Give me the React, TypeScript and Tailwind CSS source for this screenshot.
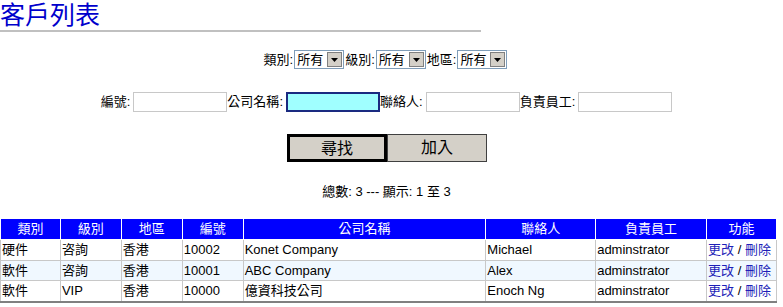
import React from 'react';

const font = { fontFamily: '"Liberation Sans", "Noto Sans CJK TC", sans-serif' };

function FakeSelect() {
  return (
    <div className="flex h-[19px] w-[50px] items-center border border-[#7f9db9] bg-white">
      <span className="flex-1 pl-[2px] text-[13px] leading-none text-black">所有</span>
      <span className="mr-[1px] flex h-[15px] w-[15px] items-center justify-center border border-[#808080] bg-[#d4d0c8]">
        <svg width="7" height="4" viewBox="0 0 7 4">
          <path d="M0 0h7L3.5 4z" fill="#000" />
        </svg>
      </span>
    </div>
  );
}

function Field({ label, active }: { label: string; active?: boolean }) {
  return (
    <div className="flex items-center">
      <span className="text-[13px]">{label}:</span>
      <div
        className={
          active
            ? 'ml-[3px] h-[20px] w-[94px] border-2 border-[#1a2a80] bg-[#a0ffff]'
            : 'ml-[3px] h-[20px] w-[94px] border border-[#c8c8c8] bg-white'
        }
      />
    </div>
  );
}

const rows = [
  { type: '硬件', level: '咨詢', area: '香港', id: '10002', name: 'Konet Company', contact: 'Michael', bg: 'bg-white' },
  { type: '軟件', level: '咨詢', area: '香港', id: '10001', name: 'ABC Company', contact: 'Alex', bg: 'bg-[#f0f8ff]' },
  { type: '軟件', level: 'VIP', area: '香港', id: '10000', name: '億資科技公司', contact: 'Enoch Ng', bg: 'bg-white' },
];

const heads = ['類別', '級別', '地區', '編號', '公司名稱', '聯絡人', '負責員工', '功能'];
const widths = ['w-[60px]', 'w-[61px]', 'w-[61px]', 'w-[61px]', 'w-[243px]', 'w-[110px]', 'w-[111px]', 'w-[70px]'];

export default function App() {
  return (
    <div className="h-[307px] w-[783px] overflow-hidden bg-white text-black" style={font}>
      {/* Title */}
      <h1 className="pt-[1px] text-[25px] leading-[28px] text-[#0000cc]">客戶列表</h1>
      <div className="mt-[1px] h-[2px] w-[481px] bg-[#c0c0c0]" />

      {/* Filters */}
      <div className="mt-[18px] flex items-center justify-center gap-[1px] pr-[12px] text-[13px]">
        <span>類別:</span>
        <FakeSelect />
        <span>級別:</span>
        <FakeSelect />
        <span>地區:</span>
        <FakeSelect />
      </div>

      {/* Search fields */}
      <div className="mt-[22px] flex items-center justify-center pr-[10px]">
        <Field label="編號" />
        <Field label="公司名稱" active />
        <Field label="聯絡人" />
        <Field label="負責員工" />
      </div>

      {/* Buttons */}
      <div className="mt-[22px] flex justify-center pr-[9px]">
        <button className="h-[28px] w-[100px] border-[3px] border-black bg-[#d4d0c8] text-[16px]">尋找</button>
        <button className="h-[28px] w-[100px] border border-[#404040] bg-[#d4d0c8] text-[16px]">加入</button>
      </div>

      <div className="mt-[20px] pr-[10px] text-center text-[13px]">總數: 3 --- 顯示: 1 至 3</div>

      {/* Table */}
      <table className="mt-[17px] w-[777px] border-collapse border-b-2 border-r border-[#808080] text-[13px]">
        <thead>
          <tr className="h-[21px] bg-[#0000ff] text-white">
            {heads.map((h, i) => (
              <th key={h} className={`${widths[i]} border border-white p-0 text-center font-normal`}>
                {h}
              </th>
            ))}
          </tr>
        </thead>
        <tbody>
          {rows.map((r) => (
            <tr key={r.id} className={`h-[20px] ${r.bg}`}>
              <td className="border border-[#c8c8c8] p-0 pl-[1px]">{r.type}</td>
              <td className="border border-[#c8c8c8] p-0 pl-[1px]">{r.level}</td>
              <td className="border border-[#c8c8c8] p-0 pl-[1px]">{r.area}</td>
              <td className="border border-[#c8c8c8] p-0 pl-[1px]">{r.id}</td>
              <td className="border border-[#c8c8c8] p-0 pl-[1px]">{r.name}</td>
              <td className="border border-[#c8c8c8] p-0 pl-[1px]">{r.contact}</td>
              <td className="border border-[#c8c8c8] p-0 pl-[1px]">adminstrator</td>
              <td className="border border-[#c8c8c8] p-0 pl-[1px]">
                <a className="text-[#1f1fb8]">更改</a> / <a className="text-[#1f1fb8]">刪除</a>
              </td>
            </tr>
          ))}
        </tbody>
      </table>
    </div>
  );
}
